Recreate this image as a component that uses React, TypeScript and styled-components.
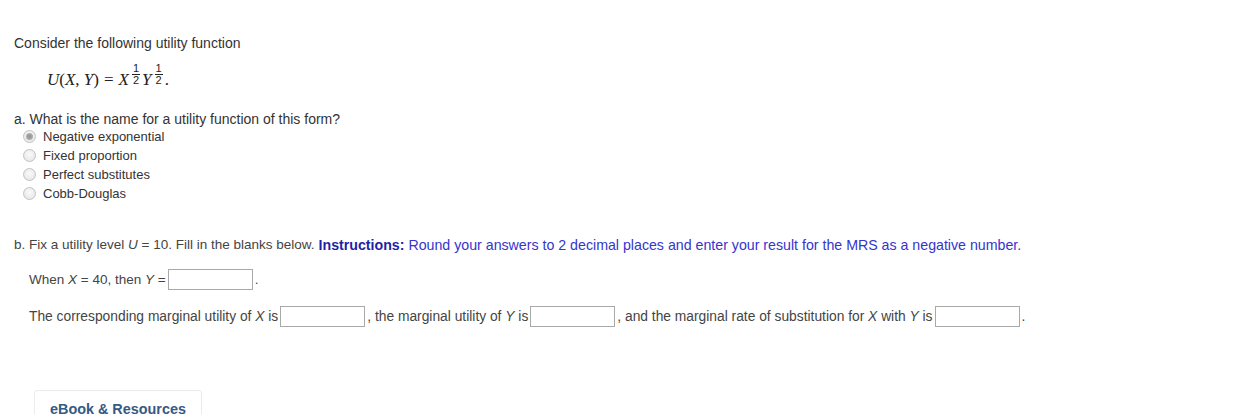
import React from 'react';
import styled, { createGlobalStyle } from 'styled-components';

const GlobalStyle = createGlobalStyle`
	html, body {
		margin: 0;
		padding: 0;
		background: #fff;
	}
	body {
		font-family: "Liberation Sans", Arial, sans-serif;
		font-size: 14px;
		color: #333;
	}
`;

const Page = styled.div`
	padding: 35px 0 0 14px;
	width: 1220px;
	height: 379px;
	overflow: hidden;
`;

const Line = styled.div<{ $top?: number; $indent?: number; $size?: number }>`
	line-height: 16px;
	margin-top: ${(p) => p.$top ?? 0}px;
	padding-left: ${(p) => p.$indent ?? 0}px;
	${(p) => (p.$size ? `font-size: ${p.$size}px;` : '')}
	white-space: nowrap;
	display: flex;
	align-items: center;
`;

const Formula = styled.div`
	margin: 11px 0 0 33px;
	height: 28px;
	display: flex;
	align-items: flex-end;
	font-family: "Liberation Serif", "Times New Roman", serif;
	font-size: 17px;
	color: #222;
`;

const Var = styled.i`
	font-family: "Liberation Serif", "Times New Roman", serif;
	font-style: italic;
`;

const SansVar = styled.i`
	font-style: italic;
	font-family: "Liberation Sans", Arial, sans-serif;
`;

const Op = styled.span`
	margin: 0 5px;
`;

const Frac = styled.span`
	display: inline-flex;
	flex-direction: column;
	align-items: center;
	font-family: "Liberation Sans", Arial, sans-serif;
	font-size: 11px;
	line-height: 10px;
	margin: 0 2px 5px 3px;
	& > span:first-child {
		border-bottom: 1px solid #222;
		padding: 0 1px 1px;
	}
`;

const Options = styled.div`
	margin-top: 0;
	padding-left: 9px;
	display: flex;
	flex-direction: column;
`;

const Option = styled.label`
	display: flex;
	align-items: center;
	gap: 7px;
	height: 19px;
	font-size: 13px;
`;

const Radio = styled.span<{ $checked?: boolean }>`
	width: 11px;
	height: 11px;
	border-radius: 50%;
	border: 1px solid #c2c2c2;
	background: radial-gradient(circle at 50% 40%, #fafafa, #e2e2e2);
	display: flex;
	align-items: center;
	justify-content: center;
	&::after {
		content: '';
		width: 7px;
		height: 7px;
		border-radius: 50%;
		background: ${(p) => (p.$checked ? 'radial-gradient(circle, #9a9a9a 30%, #c4c4c4)' : 'transparent')};
	}
`;

const PartB = styled.div`
	margin-top: 34px;
	font-size: 13.5px;
	color: #444;
`;

const Instr = styled.span`
	color: #3535cc;
	margin-left: 4px;
	font-size: 14.2px;
	& > b {
		color: #1f1fa8;
		margin-right: 4px;
	}
`;

const Blank = styled.span`
	display: inline-block;
	width: 83px;
	height: 19px;
	border: 1px solid #a9a9a9;
	background: #fff;
	margin: 0 2px;
`;

const ResourcesButton = styled.div`
	margin: 63px 0 0 20px;
	display: inline-block;
	padding: 10px 15px;
	border: 1px solid #ececec;
	border-radius: 3px;
	font-weight: bold;
	font-size: 14.4px;
	color: #345a85;
`;

const App: React.FC = () => {
	return (
		<>
			<GlobalStyle />
			<Page>
				<Line>Consider the following utility function</Line>
				<Formula>
					<Var>U</Var>(<Var>X</Var>,&nbsp;<Var>Y</Var>)
					<Op>=</Op>
					<Var>X</Var>
					<Frac>
						<span>1</span>
						<span>2</span>
					</Frac>
					<Var>Y</Var>
					<Frac>
						<span>1</span>
						<span>2</span>
					</Frac>
					.
				</Formula>
				<Line $top={21}>a. What is the name for a utility function of this form?</Line>
				<Options>
					<Option>
						<Radio $checked />
						Negative exponential
					</Option>
					<Option>
						<Radio />
						Fixed proportion
					</Option>
					<Option>
						<Radio />
						Perfect substitutes
					</Option>
					<Option>
						<Radio />
						Cobb-Douglas
					</Option>
				</Options>
				<PartB>
					<Line>
						b. Fix a utility level&nbsp;<SansVar>U</SansVar>&nbsp;= 10. Fill in the blanks below.
						<Instr>
							<b>Instructions:</b>Round your answers to 2 decimal places and enter your
							result for the MRS as a negative number.
						</Instr>
					</Line>
					<Line $top={16} $indent={15}>
						When&nbsp;<SansVar>X</SansVar>&nbsp;= 40, then&nbsp;<SansVar>Y</SansVar>&nbsp;=
						<Blank />.
					</Line>
					<Line $top={16} $indent={15} $size={13.8}>
						The corresponding marginal utility of&nbsp;<SansVar>X</SansVar>&nbsp;is<Blank />, the
						marginal utility of&nbsp;<SansVar>Y</SansVar>&nbsp;is<Blank />, and the marginal
						rate of substitution for&nbsp;<SansVar>X</SansVar>&nbsp;with&nbsp;
						<SansVar>Y</SansVar>&nbsp;is<Blank />.
					</Line>
				</PartB>
				<ResourcesButton>eBook &amp; Resources</ResourcesButton>
			</Page>
		</>
	);
};

export default App;
